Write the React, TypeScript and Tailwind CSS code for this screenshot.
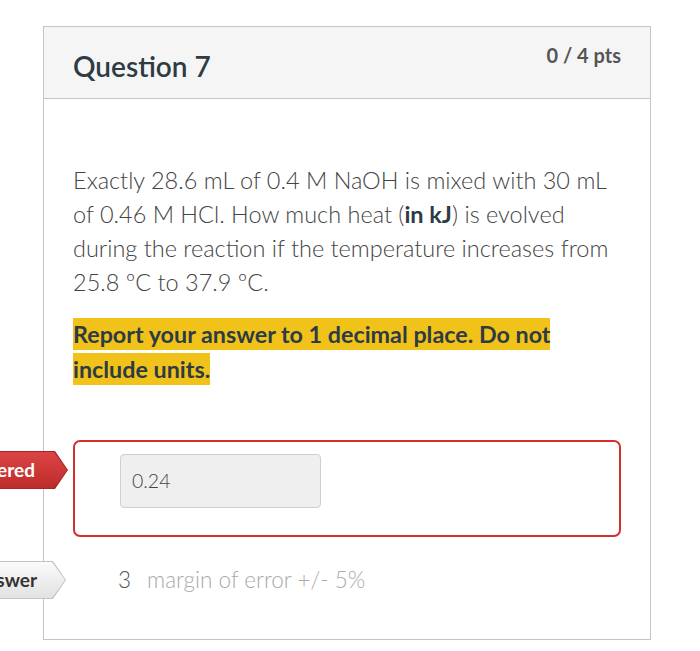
import React from 'react';

const tagShape =
  '[clip-path:polygon(0_0,calc(100%_-_13px)_0,100%_50%,calc(100%_-_13px)_100%,0_100%)]';

function Tag({ label, variant }: { label: string; variant: 'wrong' | 'correct' }) {
  const wrong = variant === 'wrong';
  return (
    <div
      className={`absolute right-[calc(100%_+_7px)] h-[38px] p-px ${tagShape} ${
        wrong ? 'top-[9px] bg-[#a82323]' : 'top-0 bg-[#c4c4c4]'
      }`}
    >
      <div
        className={`flex h-full items-center justify-end whitespace-nowrap text-[19px] font-bold ${tagShape} ${
          wrong
            ? 'bg-gradient-to-b from-[#dc4444] to-[#bd2b2b] pr-[32px] text-white'
            : 'bg-gradient-to-b from-[#fbfbfb] to-[#e2e2e2] pr-[28px] text-[#333]'
        }`}
      >
        {label}
      </div>
    </div>
  );
}

export default function App() {
  return (
    <div
      className="min-h-[651px] w-[700px] overflow-hidden bg-white pl-[43px] pt-[26px]"
      style={{ fontFamily: 'Lato, "Open Sans", sans-serif' }}
    >
      <div className="w-[608px] border-[1.5px] border-[#c4c4c4] bg-white">
        {/* Header */}
        <div className="flex h-[72px] items-start justify-between border-b-[1.5px] border-[#c4c4c4] bg-[#f5f5f5] px-[29px]">
          <h2 className="mt-[18px] text-[28px] font-semibold text-[#2d3b45]">Question 7</h2>
          <span className="mt-[13px] text-[20px] font-bold text-[#555]">0 / 4 pts</span>
        </div>

        {/* Body */}
        <div className="px-[29px] pb-[40px] pt-[64px]">
          <p className="text-[23.5px] font-light leading-[34px] text-[#444]">
            Exactly 28.6 mL of 0.4 M NaOH is mixed with 30 mL of 0.46 M HCl. How much heat (
            <strong className="font-bold text-[#2d3b45]">in kJ</strong>) is evolved during the
            reaction if the temperature increases from 25.8 ºC to 37.9 ºC.
          </p>
          <p className="mt-[18px] text-[23.3px] font-bold leading-[35px] text-[#2d3b45]">
            <span className="bg-[#f1c31a] py-[2px] [box-decoration-break:clone]">
              Report your answer to 1 decimal place. Do not include units.
            </span>
          </p>

          {/* Your answer */}
          <div className="relative mt-[53px] h-[97px] rounded-[7px] border-[2.5px] border-[#d32f2f] pl-[45px] pt-[12px]">
            <Tag label="You Answered" variant="wrong" />
            <div className="flex h-[54px] w-[201px] items-center rounded-[4px] border border-[#cfcfcf] bg-[#efefef] px-[11px] text-[19.5px] font-light text-[#444]">
              0.24
            </div>
          </div>

          {/* Correct answer */}
          <div className="relative mt-[24px] flex h-[38px] items-center pl-[45px] text-[22.5px] font-light">
            <Tag label="Correct Answer" variant="correct" />
            <span className="text-[#555]">3</span>
            <span className="ml-[16px] text-[#aaa]">margin of error +/- 5%</span>
          </div>
        </div>
      </div>
    </div>
  );
}
